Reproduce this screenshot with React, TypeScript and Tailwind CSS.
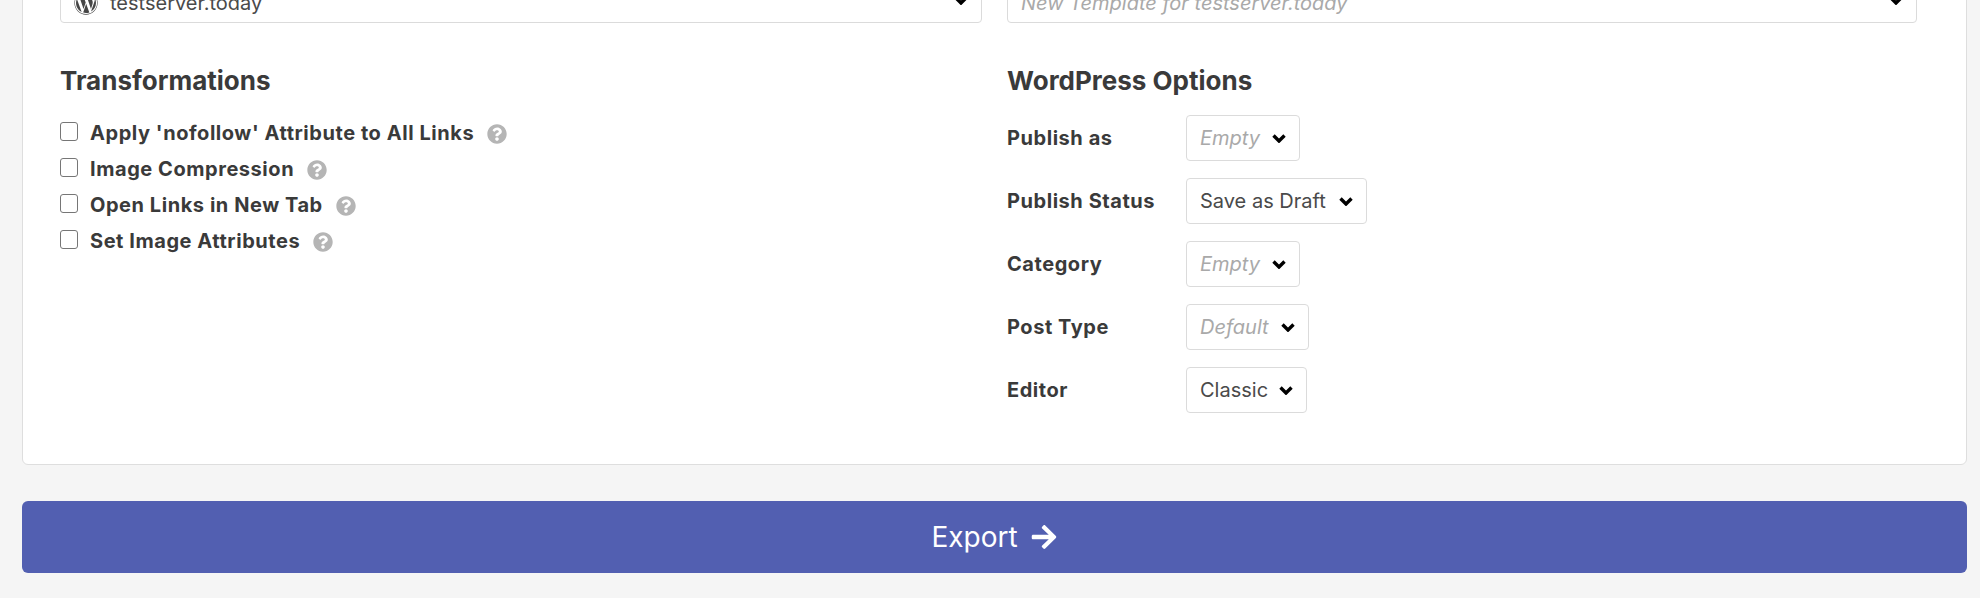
import React from "react";
import { FaArrowRight, FaQuestionCircle, FaWordpress } from "react-icons/fa";

const transformations = [
  "Apply 'nofollow' Attribute to All Links",
  "Image Compression",
  "Open Links in New Tab",
  "Set Image Attributes",
];

const wpOptions = [
  { label: "Publish as", value: "Empty", empty: true, width: "w-[114px]" },
  { label: "Publish Status", value: "Save as Draft", empty: false, width: "w-[181px]" },
  { label: "Category", value: "Empty", empty: true, width: "w-[114px]" },
  { label: "Post Type", value: "Default", empty: true, width: "w-[123px]" },
  { label: "Editor", value: "Classic", empty: false, width: "w-[121px]" },
];

function Chevron() {
  return (
    <svg viewBox="0 0 14 9" className="h-[9px] w-[14px] shrink-0 text-black" fill="none" stroke="currentColor" strokeWidth="3.4">
      <path d="M1.5 1.5 L7 7 L12.5 1.5" />
    </svg>
  );
}

function SmallSelect({ value, empty, width }: { value: string; empty: boolean; width: string }) {
  return (
    <div className={`flex h-[46px] items-center justify-between rounded border border-[#dbdbdb] bg-white px-[13px] text-[20px] ${width}`}>
      <span className={empty ? "italic text-[#a9a9a9]" : "text-[#4a4a4a]"}>{value}</span>
      <Chevron />
    </div>
  );
}

export default function App() {
  return (
    <div className="h-[598px] w-[1980px] overflow-hidden bg-[#f5f5f5] font-['Inter',sans-serif] text-[#3a3a3a]">
      <div className="ml-[22px] -mt-[24px] h-[489px] w-[1945px] rounded-b-md border border-[#dedede] bg-white pl-[37px] pr-[34px]">
        <div className="flex gap-[25px]">
          <div className="flex h-[46px] w-[922px] items-center justify-between rounded border border-[#dbdbdb] px-[13px]">
            <div className="flex items-center gap-[12px] pt-[6px] text-[20px] text-[#4a4a4a]">
              <FaWordpress className="h-[24px] w-[24px] text-[#464646]" />
              <span>testserver.today</span>
            </div>
            <Chevron />
          </div>
          <div className="flex h-[46px] w-[910px] items-center justify-between rounded border border-[#dbdbdb] px-[13px]">
            <span className="pt-[6px] text-[20px] italic text-[#a9a9a9]">New Template for testserver.today</span>
            <Chevron />
          </div>
        </div>

        <div className="mt-[41px] flex gap-[25px]">
          <div className="w-[922px]">
            <h3 className="text-[26px] font-bold leading-[34px]">Transformations</h3>
            <div className="mt-[22px] flex flex-col gap-[9px]">
              {transformations.map((label) => (
                <label key={label} className="flex h-[27px] items-center">
                  <span className="-mt-[4px] h-[19px] w-[18px] rounded-[3px] border border-[#767676] bg-white" />
                  <span className="ml-[12px] text-[20px] font-bold leading-[27px] tracking-[0.55px]">{label}</span>
                  <FaQuestionCircle className="ml-[13px] h-[20px] w-[20px] text-[#b5b5b5]" />
                </label>
              ))}
            </div>
          </div>

          <div className="w-[910px]">
            <h3 className="text-[26px] font-bold leading-[34px]">WordPress Options</h3>
            <div className="mt-[17px] flex flex-col gap-[17px]">
              {wpOptions.map((opt) => (
                <div key={opt.label} className="flex items-center">
                  <span className="w-[179px] text-[20px] font-bold tracking-[0.55px]">{opt.label}</span>
                  <SmallSelect value={opt.value} empty={opt.empty} width={opt.width} />
                </div>
              ))}
            </div>
          </div>
        </div>
      </div>

      <button className="ml-[22px] mt-[36px] flex h-[72px] w-[1945px] items-center justify-center gap-[12px] rounded-md bg-[#525fb1] text-[28px] text-white">
        <span>Export</span>
        <FaArrowRight className="h-[28px] w-[28px]" />
      </button>
    </div>
  );
}
